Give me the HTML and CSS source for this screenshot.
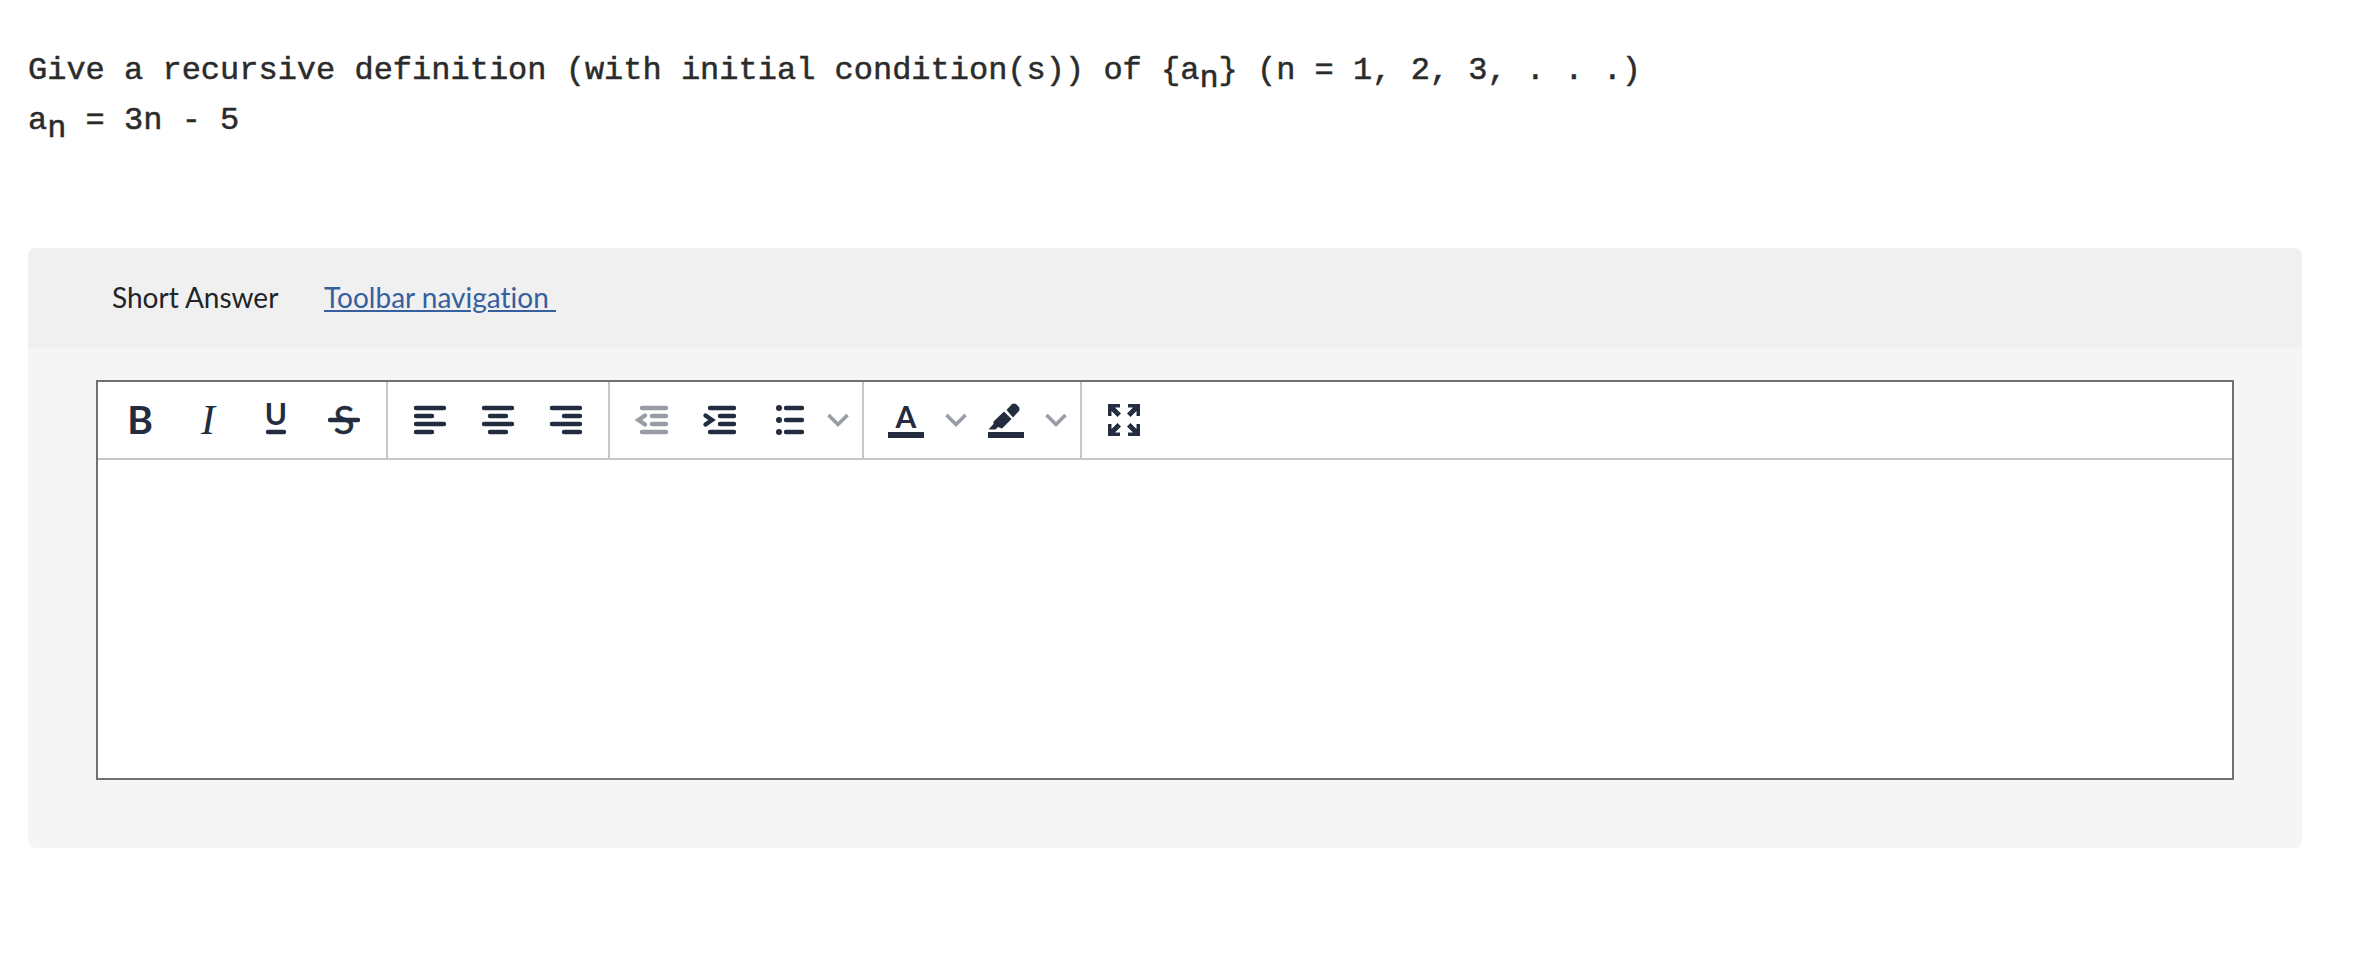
FILE: index.html
```html
<!DOCTYPE html>
<html lang="en">
<head>
    <meta charset="UTF-8">
    <title>Short Answer</title>
    <link rel="stylesheet" href="styles.css">
</head>
<body>
    <div class="question">
        <p>Give a recursive definition (with initial condition(s)) of {a<sub>n</sub>} (n = 1, 2, 3, . . .)</p>
        <p>a<sub>n</sub> = 3n - 5</p>
    </div>

    <div class="card">
        <div class="card-header">
            <span class="card-label">Short Answer</span>
            <a class="card-link" href="#">Toolbar navigation&nbsp;</a>
        </div>
        <div class="card-body">
            <div class="editor">
                <div class="toolbar">
                    <div class="tool-group">
                        <button class="tool"><svg class="ico" viewBox="-14 -18 68 76"><text class="t-bold" x="20" y="34">B</text></svg></button>
                        <button class="tool"><svg class="ico" viewBox="-14 -18 68 76"><text class="t-italic" x="20" y="34">I</text></svg></button>
                        <button class="tool"><svg class="ico" viewBox="-14 -18 68 76"><text class="t-under" x="20" y="25">U</text><path class="ln" d="M12 32H28"/></svg></button>
                        <button class="tool"><svg class="ico" viewBox="-14 -18 68 76"><text class="t-strike" x="20" y="34">S</text><path class="ln" d="M6 20H34"/></svg></button>
                    </div>
                    <div class="tool-group">
                        <button class="tool"><svg class="ico" viewBox="-14 -18 68 76"><path class="ln" d="M6 8H34M6 16H22M6 24H34M6 32H22"/></svg></button>
                        <button class="tool"><svg class="ico" viewBox="-14 -18 68 76"><path class="ln" d="M6 8H34M12 16H28M6 24H34M12 32H28"/></svg></button>
                        <button class="tool"><svg class="ico" viewBox="-14 -18 68 76"><path class="ln" d="M6 8H34M18 16H34M6 24H34M18 32H34"/></svg></button>
                    </div>
                    <div class="tool-group">
                        <button class="tool"><svg class="ico ico-off" viewBox="-14 -18 68 76"><path class="ln" d="M10 8H34M20 16H34M20 24H34M10 32H34M13 15.5L6.5 20L13 24.5"/></svg></button>
                        <button class="tool"><svg class="ico" viewBox="-14 -18 68 76"><path class="ln" d="M10 8H34M20 16H34M20 24H34M10 32H34M5.5 15.5L12 20L5.5 24.5"/></svg></button>
                        <button class="tool"><svg class="ico" viewBox="-14 -18 68 76"><circle cx="11" cy="8" r="3"/><circle cx="11" cy="20" r="3"/><circle cx="11" cy="32" r="3"/><path class="ln" d="M18 8H34M18 20H34M18 32H34"/></svg></button>
                        <button class="tool-arrow"><svg class="chev" viewBox="0 0 32 40"><path d="M6.5 15L16 24.5L25.5 15"/></svg></button>
                    </div>
                    <div class="tool-group">
                        <button class="tool"><svg class="ico" viewBox="-14 -18 68 76"><text class="t-color" x="20" y="28">A</text><rect x="2" y="32" width="36" height="6"/></svg></button>
                        <button class="tool-arrow"><svg class="chev" viewBox="0 0 32 40"><path d="M6.5 15L16 24.5L25.5 15"/></svg></button>
                        <button class="tool"><svg class="ico" viewBox="-14 -18 68 76"><path d="M20.5 10L26 4Q28 3 30 4L33 7Q34 9 33 11L27 17.5zM18 11.5L25.5 19L16 28.5L12 27L9.5 29.5H2.5L7.5 24V21.5z"/><rect x="2" y="32" width="36" height="6"/></svg></button>
                        <button class="tool-arrow"><svg class="chev" viewBox="0 0 32 40"><path d="M6.5 15L16 24.5L25.5 15"/></svg></button>
                    </div>
                    <div class="tool-group tool-group-last">
                        <button class="tool"><svg class="ico" viewBox="-14 -18 68 76"><path d="M4 4H16V7.5H11L17 13.5L13.5 17L7.5 11V16H4zM36 4H24V7.5H29L23 13.5L26.5 17L32.5 11V16H36zM4 36H16V32.5H11L17 26.5L13.5 23L7.5 29V24H4zM36 36H24V32.5H29L23 26.5L26.5 23L32.5 29V24H36z"/></svg></button>
                    </div>
                </div>
                <div class="editor-area"></div>
            </div>
        </div>
    </div>
</body>
</html>
```

FILE: styles.css
```css
body {
    margin: 0;
    padding: 0 54px 0 28px;
    background-color: #fff;
    font-family: "Lato", sans-serif;
}
.question {
    height: 248px;
    padding-top: 46px;
    box-sizing: border-box;
    font-family: "Liberation Mono", monospace;
    font-size: 32px;
    line-height: 50px;
    color: #2b2b2b;
    -webkit-text-stroke: 0.5px #2b2b2b;
}
.question p {
    margin: 0;
}
.question sub {
    font-size: 32px;
    line-height: 0;
    vertical-align: -8px;
}
.card {
    border-radius: 8px;
    overflow: hidden;
    background-color: #f5f5f5;
}
.card-header {
    display: flex;
    align-items: center;
    height: 98px;
    padding: 0 0 2px 84px;
    background-color: #f0f0f0;
    font-size: 28px;
    font-variant-ligatures: none;
}
.card-label {
    width: 212px;
    color: #202428;
}
.card-link {
    color: #365f9f;
}
.card-body {
    padding: 32px 68px 68px;
}
.editor {
    border: 2px solid #707070;
    background-color: #fff;
}
.toolbar {
    display: flex;
    height: 76px;
    border-bottom: 2px solid #c7c7c7;
}
.tool-group {
    display: flex;
    align-items: center;
    padding: 0 8px;
    border-right: 2px solid #c7c7c7;
}
.tool-group-last {
    border-right: none;
}
.tool, .tool-arrow {
    display: flex;
    align-items: center;
    justify-content: center;
    width: 68px;
    height: 76px;
    padding: 0;
    border: none;
    background: none;
}
.tool-arrow {
    width: 32px;
}
.ico {
    width: 68px;
    height: 76px;
    fill: #232d3f;
}
.ico text {
    text-anchor: middle;
    font-family: "Lato", sans-serif;
}
.ln {
    fill: none;
    stroke: #232d3f;
    stroke-width: 4.4;
    stroke-linecap: round;
}
.ico-off .ln {
    stroke: #989ca5;
}
.t-bold {
    font-size: 39px;
    font-weight: 700;
}
.ico .t-italic {
    font-family: "Liberation Serif", serif;
    font-size: 42px;
    font-style: italic;
}
.t-under {
    font-size: 30px;
    font-weight: 700;
}
.t-strike {
    font-size: 39px;
    stroke: #232d3f;
    stroke-width: 0.5;
}
.t-color {
    font-size: 30px;
    font-weight: 700;
}
.chev {
    width: 32px;
    height: 40px;
    fill: none;
    stroke: #989ca5;
    stroke-width: 3.6;
}
.editor-area {
    height: 318px;
}
```
